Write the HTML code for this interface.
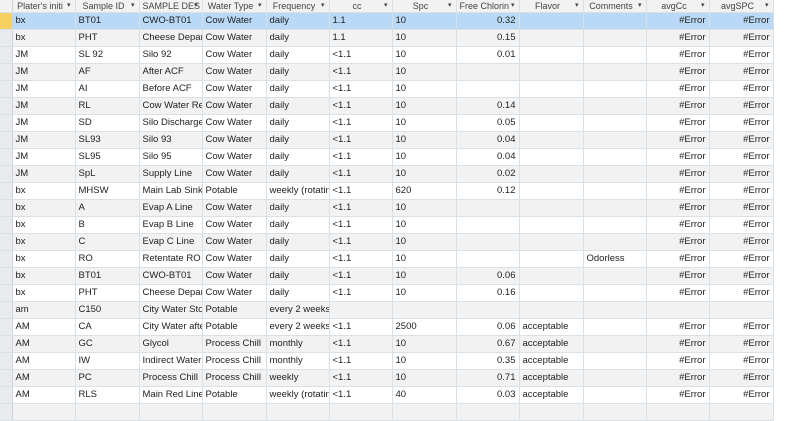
<!DOCTYPE html><html><head><style>
body{margin:0;width:800px;height:412px;overflow:hidden;background:#fff;font-family:"Liberation Sans",sans-serif;font-size:9.5px;color:#222}
table{border-collapse:collapse;table-layout:fixed;width:773px}
td{height:16px;line-height:16px;padding:0 3px;border-right:1px solid #d8e0e8;border-bottom:1px solid #d8e0e8;white-space:nowrap;overflow:hidden}
td:first-child{background:#e8eaee;padding:0;border-right:1px solid #cfd4da}
td:nth-child(9),td:nth-child(12),td:nth-child(13){text-align:right}
tr.a td{background:#f2f2f2}
tr.a td:first-child{background:#e8eaee}
tr.s td{background:#b9d9f7}
tr.s td:first-child{background:#f8d060}
tr.h td{background:#f2f2f2;color:#444;height:12px;line-height:12px;text-align:center;position:relative;font-size:9px;padding-right:10px}
tr.h td span{position:absolute;right:4px;top:0;font-size:7px}
</style></head><body>
<table>
<colgroup><col style="width:12px"><col style="width:63px"><col style="width:64px"><col style="width:63px"><col style="width:64px"><col style="width:63px"><col style="width:63px"><col style="width:64px"><col style="width:63px"><col style="width:64px"><col style="width:63px"><col style="width:63px"><col style="width:64px"></colgroup>
<tr class="h"><td></td><td>Plater's initi<span>▾</span></td><td>Sample ID<span>▾</span></td><td>SAMPLE DES<span>▾</span></td><td>Water Type<span>▾</span></td><td>Frequency<span>▾</span></td><td>cc<span>▾</span></td><td>Spc<span>▾</span></td><td>Free Chlorin<span>▾</span></td><td>Flavor<span>▾</span></td><td>Comments<span>▾</span></td><td>avgCc<span>▾</span></td><td>avgSPC<span>▾</span></td></tr>
<tr class="s"><td></td><td>bx</td><td>BT01</td><td>CWO-BT01</td><td>Cow Water</td><td>daily</td><td>1.1</td><td>10</td><td>0.32</td><td></td><td></td><td>#Error</td><td>#Error</td></tr>
<tr class="a"><td></td><td>bx</td><td>PHT</td><td>Cheese Depart</td><td>Cow Water</td><td>daily</td><td>1.1</td><td>10</td><td>0.15</td><td></td><td></td><td>#Error</td><td>#Error</td></tr>
<tr><td></td><td>JM</td><td>SL 92</td><td>Silo 92</td><td>Cow Water</td><td>daily</td><td>&lt;1.1</td><td>10</td><td>0.01</td><td></td><td></td><td>#Error</td><td>#Error</td></tr>
<tr class="a"><td></td><td>JM</td><td>AF</td><td>After ACF</td><td>Cow Water</td><td>daily</td><td>&lt;1.1</td><td>10</td><td></td><td></td><td></td><td>#Error</td><td>#Error</td></tr>
<tr><td></td><td>JM</td><td>AI</td><td>Before ACF</td><td>Cow Water</td><td>daily</td><td>&lt;1.1</td><td>10</td><td></td><td></td><td></td><td>#Error</td><td>#Error</td></tr>
<tr class="a"><td></td><td>JM</td><td>RL</td><td>Cow Water Ret</td><td>Cow Water</td><td>daily</td><td>&lt;1.1</td><td>10</td><td>0.14</td><td></td><td></td><td>#Error</td><td>#Error</td></tr>
<tr><td></td><td>JM</td><td>SD</td><td>Silo Discharge</td><td>Cow Water</td><td>daily</td><td>&lt;1.1</td><td>10</td><td>0.05</td><td></td><td></td><td>#Error</td><td>#Error</td></tr>
<tr class="a"><td></td><td>JM</td><td>SL93</td><td>Silo 93</td><td>Cow Water</td><td>daily</td><td>&lt;1.1</td><td>10</td><td>0.04</td><td></td><td></td><td>#Error</td><td>#Error</td></tr>
<tr><td></td><td>JM</td><td>SL95</td><td>Silo 95</td><td>Cow Water</td><td>daily</td><td>&lt;1.1</td><td>10</td><td>0.04</td><td></td><td></td><td>#Error</td><td>#Error</td></tr>
<tr class="a"><td></td><td>JM</td><td>SpL</td><td>Supply Line</td><td>Cow Water</td><td>daily</td><td>&lt;1.1</td><td>10</td><td>0.02</td><td></td><td></td><td>#Error</td><td>#Error</td></tr>
<tr><td></td><td>bx</td><td>MHSW</td><td>Main Lab Sink V</td><td>Potable</td><td>weekly (rotatin</td><td>&lt;1.1</td><td>620</td><td>0.12</td><td></td><td></td><td>#Error</td><td>#Error</td></tr>
<tr class="a"><td></td><td>bx</td><td>A</td><td>Evap A Line</td><td>Cow Water</td><td>daily</td><td>&lt;1.1</td><td>10</td><td></td><td></td><td></td><td>#Error</td><td>#Error</td></tr>
<tr><td></td><td>bx</td><td>B</td><td>Evap B Line</td><td>Cow Water</td><td>daily</td><td>&lt;1.1</td><td>10</td><td></td><td></td><td></td><td>#Error</td><td>#Error</td></tr>
<tr class="a"><td></td><td>bx</td><td>C</td><td>Evap C Line</td><td>Cow Water</td><td>daily</td><td>&lt;1.1</td><td>10</td><td></td><td></td><td></td><td>#Error</td><td>#Error</td></tr>
<tr><td></td><td>bx</td><td>RO</td><td>Retentate RO T</td><td>Cow Water</td><td>daily</td><td>&lt;1.1</td><td>10</td><td></td><td></td><td>Odorless</td><td>#Error</td><td>#Error</td></tr>
<tr class="a"><td></td><td>bx</td><td>BT01</td><td>CWO-BT01</td><td>Cow Water</td><td>daily</td><td>&lt;1.1</td><td>10</td><td>0.06</td><td></td><td></td><td>#Error</td><td>#Error</td></tr>
<tr><td></td><td>bx</td><td>PHT</td><td>Cheese Depart</td><td>Cow Water</td><td>daily</td><td>&lt;1.1</td><td>10</td><td>0.16</td><td></td><td></td><td>#Error</td><td>#Error</td></tr>
<tr class="a"><td></td><td>am</td><td>C150</td><td>City Water Stor</td><td>Potable</td><td>every 2 weeks</td><td></td><td></td><td></td><td></td><td></td><td></td><td></td></tr>
<tr><td></td><td>AM</td><td>CA</td><td>City Water afte</td><td>Potable</td><td>every 2 weeks</td><td>&lt;1.1</td><td>2500</td><td>0.06</td><td>acceptable</td><td></td><td>#Error</td><td>#Error</td></tr>
<tr class="a"><td></td><td>AM</td><td>GC</td><td>Glycol</td><td>Process Chill</td><td>monthly</td><td>&lt;1.1</td><td>10</td><td>0.67</td><td>acceptable</td><td></td><td>#Error</td><td>#Error</td></tr>
<tr><td></td><td>AM</td><td>IW</td><td>Indirect Water</td><td>Process Chill</td><td>monthly</td><td>&lt;1.1</td><td>10</td><td>0.35</td><td>acceptable</td><td></td><td>#Error</td><td>#Error</td></tr>
<tr class="a"><td></td><td>AM</td><td>PC</td><td>Process Chill</td><td>Process Chill</td><td>weekly</td><td>&lt;1.1</td><td>10</td><td>0.71</td><td>acceptable</td><td></td><td>#Error</td><td>#Error</td></tr>
<tr><td></td><td>AM</td><td>RLS</td><td>Main Red Line</td><td>Potable</td><td>weekly (rotatin</td><td>&lt;1.1</td><td>40</td><td>0.03</td><td>acceptable</td><td></td><td>#Error</td><td>#Error</td></tr>
<tr class="a"><td></td><td></td><td></td><td></td><td></td><td></td><td></td><td></td><td></td><td></td><td></td><td></td><td></td></tr>
</table>
</body></html>
